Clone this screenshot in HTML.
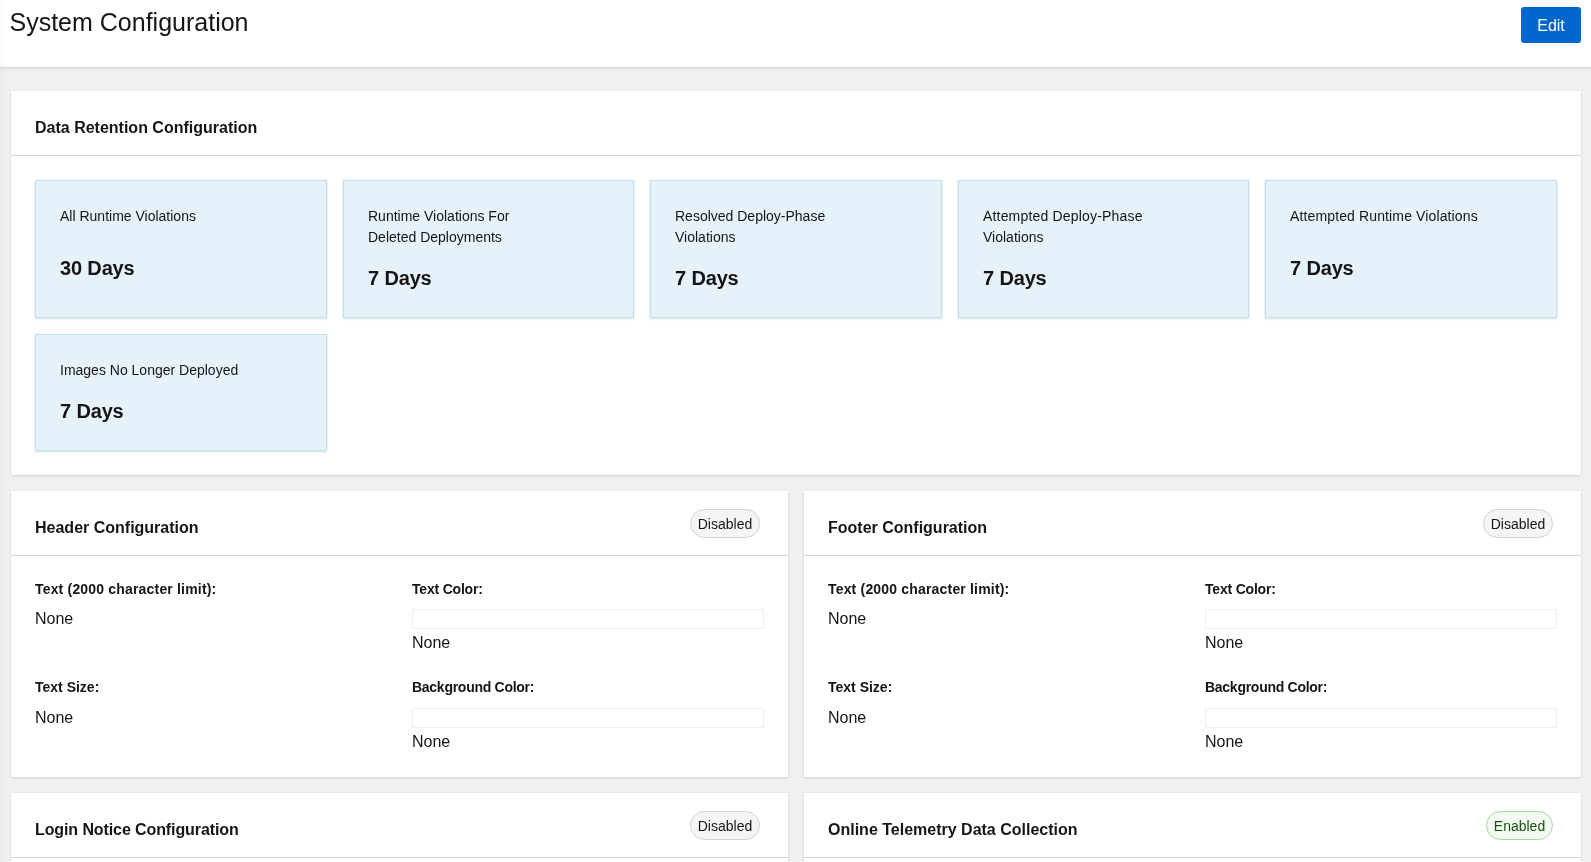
<!DOCTYPE html>
<html>
<head>
<meta charset="utf-8">
<style>
*{box-sizing:border-box;margin:0;padding:0}
html,body{width:1591px;height:862px;overflow:hidden}
#root{position:absolute;left:0;top:0;width:1591px;height:862px;overflow:hidden;will-change:transform;background:#f0f0f0}
body{background:#f0f0f0;font-family:"Liberation Sans",sans-serif;color:#151515;position:relative}
.lstrip{position:absolute;left:0;top:0;width:5px;height:862px;background:linear-gradient(to right,rgba(0,0,0,.025),rgba(0,0,0,0));z-index:5}
.top{position:absolute;left:0;top:0;width:1591px;height:67px;background:#fff;box-shadow:0 1px 3px rgba(3,3,3,.14),0 0 1px rgba(3,3,3,.08)}
.title{position:absolute;left:9.5px;top:10.4px;font-size:25px;line-height:25px;white-space:nowrap}
.btn{position:absolute;left:1521px;top:7px;width:60px;height:36px;background:#0066cc;border-radius:3px;color:#fff;font-size:16px;line-height:36px;text-align:center}
.card{position:absolute;background:#fff;box-shadow:0 1px 2px rgba(3,3,3,.12),0 0 2px rgba(3,3,3,.06)}
.chead{position:absolute;left:0;top:0;right:0;height:65px;border-bottom:1px solid #d2d2d2}
.ctitle{position:absolute;left:24px;font-size:16px;line-height:16px;font-weight:bold;white-space:nowrap}
.tile{position:absolute;background:#e7f1fa;border:1px solid #bee1f4;width:292px;box-shadow:0 1px 2px rgba(3,3,3,.12),0 0 2px rgba(3,3,3,.06)}
.tl{position:absolute;left:24px;font-size:14px;line-height:21px;color:#151515}
.tv{position:absolute;left:24px;font-size:20px;font-weight:bold;line-height:24px;letter-spacing:-.15px}
.lbl{position:absolute;font-size:14px;line-height:14px;font-weight:bold;white-space:nowrap}
.val{position:absolute;font-size:16px;line-height:16px;white-space:nowrap}
.sw{position:absolute;height:20px;border:1px solid #efefef;background:#fff}
.badge{position:absolute;height:29px;border-radius:15px;border:1px solid #d2d2d2;background:#f5f5f5;font-size:14px;line-height:27px;text-align:center}
.badge span{position:relative;top:1px}
.badge.en{border-color:#a8d8a0;background:#f3faf2;color:#1e4f18}
</style>
</head>
<body>
<div id="root">
<div class="top">
  <div class="title">System Configuration</div>
  <div class="btn"><span style="position:relative;top:0.8px">Edit</span></div>
</div>

<!-- Data retention card -->
<div class="card" style="left:11px;top:91px;width:1570px;height:384px">
  <div class="chead"><div class="ctitle" style="top:29px">Data Retention Configuration</div></div>
  <div class="tile" style="left:24px;top:89px;height:138px"><div class="tl" style="top:25px">All Runtime Violations</div><div class="tv" style="top:75px">30 Days</div></div>
  <div class="tile" style="left:332px;top:89px;height:138px;width:291px"><div class="tl" style="top:25px">Runtime Violations For<br>Deleted Deployments</div><div class="tv" style="top:85px">7 Days</div></div>
  <div class="tile" style="left:639px;top:89px;height:138px"><div class="tl" style="top:25px">Resolved Deploy-Phase<br>Violations</div><div class="tv" style="top:85px">7 Days</div></div>
  <div class="tile" style="left:947px;top:89px;height:138px;width:291px"><div class="tl" style="top:25px"><span style="letter-spacing:.18px">Attempted Deploy-Phase</span><br>Violations</div><div class="tv" style="top:85px">7 Days</div></div>
  <div class="tile" style="left:1254px;top:89px;height:138px"><div class="tl" style="top:25px"><span style="letter-spacing:.13px">Attempted Runtime Violations</span></div><div class="tv" style="top:75px">7 Days</div></div>
  <div class="tile" style="left:24px;top:243px;height:117px"><div class="tl" style="top:25px">Images No Longer Deployed</div><div class="tv" style="top:64px">7 Days</div></div>
</div>

<!-- Header config -->
<div class="card" style="left:11px;top:491px;width:777px;height:286px">
  <div class="chead"><div class="ctitle" style="top:29px">Header Configuration</div><div class="badge" style="left:679px;top:18px;width:70px"><span>Disabled</span></div></div>
  <div class="lbl" style="left:24px;top:91px"><span style="letter-spacing:.18px">Text (2000 character limit):</span></div>
  <div class="val" style="left:24px;top:120.4px">None</div>
  <div class="lbl" style="left:24px;top:189px">Text Size:</div>
  <div class="val" style="left:24px;top:219px">None</div>
  <div class="lbl" style="left:401px;top:91px"><span style="letter-spacing:-.2px">Text Color:</span></div>
  <div class="sw" style="left:401px;top:118px;width:352px"></div>
  <div class="val" style="left:401px;top:144.4px">None</div>
  <div class="lbl" style="left:401px;top:189px"><span style="letter-spacing:-.27px">Background Color:</span></div>
  <div class="sw" style="left:401px;top:217px;width:352px"></div>
  <div class="val" style="left:401px;top:243.1px">None</div>
</div>

<!-- Footer config -->
<div class="card" style="left:804px;top:491px;width:777px;height:286px">
  <div class="chead"><div class="ctitle" style="top:29px">Footer Configuration</div><div class="badge" style="left:679px;top:18px;width:70px"><span>Disabled</span></div></div>
  <div class="lbl" style="left:24px;top:91px"><span style="letter-spacing:.18px">Text (2000 character limit):</span></div>
  <div class="val" style="left:24px;top:120.4px">None</div>
  <div class="lbl" style="left:24px;top:189px">Text Size:</div>
  <div class="val" style="left:24px;top:219px">None</div>
  <div class="lbl" style="left:401px;top:91px"><span style="letter-spacing:-.2px">Text Color:</span></div>
  <div class="sw" style="left:401px;top:118px;width:352px"></div>
  <div class="val" style="left:401px;top:144.4px">None</div>
  <div class="lbl" style="left:401px;top:189px"><span style="letter-spacing:-.27px">Background Color:</span></div>
  <div class="sw" style="left:401px;top:217px;width:352px"></div>
  <div class="val" style="left:401px;top:243.1px">None</div>
</div>

<!-- Login notice -->
<div class="card" style="left:11px;top:793px;width:777px;height:200px">
  <div class="chead"><div class="ctitle" style="top:29px"><span style="letter-spacing:-.1px">Login Notice Configuration</span></div><div class="badge" style="left:679px;top:18px;width:70px"><span>Disabled</span></div></div>
</div>

<!-- Telemetry -->
<div class="card" style="left:804px;top:793px;width:777px;height:200px">
  <div class="chead"><div class="ctitle" style="top:29px">Online Telemetry Data Collection</div><div class="badge en" style="left:682px;top:18px;width:67px"><span>Enabled</span></div></div>
</div>
<div class="lstrip"></div>
</div>
</body>
</html>
